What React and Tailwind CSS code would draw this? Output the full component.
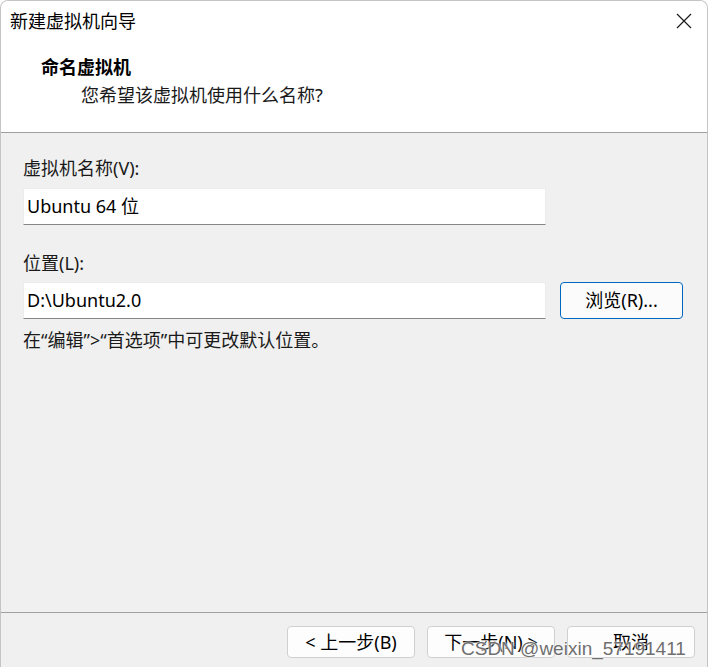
const font = "font-['Segoe_UI','Noto_Sans','Noto_Sans_CJK_SC',sans-serif]";

function FooterButton({ children }) {
  return (
    <button className="w-[128px] h-[32px] rounded-[4px] border border-[#d0d0d0] bg-[#fdfdfd] text-[18px] leading-none text-black flex items-center justify-center">
      {children}
    </button>
  );
}

function TextBox({ value }) {
  return (
    <div className="w-[523px] h-[37px] bg-white border border-[#ececec] border-b-[#868686] flex items-center pl-[3px] text-[18px] text-black">
      {value}
    </div>
  );
}

export default function App() {
  return (
    <div className={`${font} relative w-[708px] h-[667px] flex flex-col bg-[#f0f0f0] rounded-t-[8px] border-t border-x border-[#c4c4c4] overflow-hidden`}>
      <div className="bg-white h-[132px] border-b border-[#a0a0a0] flex flex-col">
        <div className="h-[39px] flex items-center justify-between pl-[9px] pr-[15px]">
          <span className="text-[18px] leading-[24px] text-black">新建虚拟机向导</span>
          <svg viewBox="0 0 16 16" className="w-[16px] h-[16px]" fill="none" stroke="#1a1a1a" strokeWidth="1.2">
            <path d="M1 1 L15 15 M15 1 L1 15" />
          </svg>
        </div>
        <div className="pl-[40px] mt-[15px] text-[18px] leading-[24px] font-bold text-black">命名虚拟机</div>
        <div className="pl-[80px] mt-[4px] text-[18px] leading-[24px] text-[#1a1a1a]">您希望该虚拟机使用什么名称?</div>
      </div>

      <div className="flex-1 px-[22px] flex flex-col">
        <div className="mt-[23px] text-[18px] leading-[24px] text-[#1a1a1a]">虚拟机名称(V):</div>
        <div className="mt-[8px]">
          <TextBox value="Ubuntu 64 位" />
        </div>
        <div className="mt-[26px] text-[18px] leading-[24px] text-[#1a1a1a]">位置(L):</div>
        <div className="mt-[7px] flex items-center gap-[14px]">
          <TextBox value="D:\Ubuntu2.0" />
          <button className="w-[123px] h-[37px] rounded-[4px] border border-[#0067c0] bg-[#fbfbfb] text-[18px] text-black flex items-center justify-center">
            浏览(R)...
          </button>
        </div>
        <div className="mt-[9px] text-[18px] leading-[24px] text-[#1a1a1a]">在“编辑”&gt;“首选项”中可更改默认位置。</div>
      </div>

      <div className="h-[55px] border-t border-[#a0a0a0] flex items-start justify-end gap-[12px] pt-[13px] pr-[12px]">
        <FooterButton>&lt; 上一步(B)</FooterButton>
        <FooterButton>下一步(N) &gt;</FooterButton>
        <FooterButton>取消</FooterButton>
      </div>

      <div className="absolute left-[460px] top-[635px] whitespace-nowrap text-[19px] leading-[26px] text-[#6f6f6f] font-['Liberation_Sans',sans-serif] [text-shadow:0_0_2px_#ffffff,0_0_2px_#ffffff]">
        CSDN @weixin_57191411
      </div>
    </div>
  );
}
